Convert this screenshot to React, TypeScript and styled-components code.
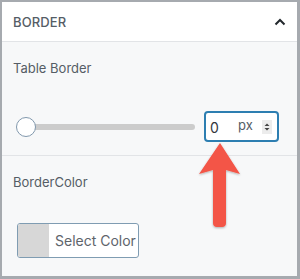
import React from "react";
import styled, { createGlobalStyle } from "styled-components";

const Global = createGlobalStyle`
  html, body { margin: 0; padding: 0; background: #ffffff; }
  * { box-sizing: border-box; }
`;

const Frame = styled.div`
  position: relative;
  width: 300px;
  height: 279px;
  border-style: solid;
  border-color: #a6aaaf;
  border-width: 2px 3px 3px 2px;
  background: #f7f8f9;
  font-family: Inter, "Liberation Sans", sans-serif;
  color: #555d66;
  overflow: hidden;
`;

const Header = styled.div`
  height: 40px;
  background: #ffffff;
  border-bottom: 1px solid #e2e4e7;
  display: flex;
  align-items: center;
  justify-content: space-between;
  padding: 0 10px 0 11px;
`;

const HeaderTitle = styled.span`
  font-size: 13px;
  font-weight: 500;
  letter-spacing: 0.1px;
  color: #555d66;
`;

const Section = styled.div<{ $pt: number; $pb: number; $divider?: boolean }>`
  padding: ${(p) => p.$pt}px 11px ${(p) => p.$pb}px 11px;
  border-bottom: ${(p) => (p.$divider ? "1px solid #e2e4e7" : "none")};
`;

const Label = styled.div`
  font-size: 13px;
  line-height: 18px;
  color: #555d66;
`;

const SliderRow = styled.div`
  display: flex;
  align-items: center;
  margin-top: 34px;
  gap: 9px;
`;

const Track = styled.div`
  position: relative;
  flex: 0 0 178px;
  margin-left: 4px;
  height: 6px;
  border-radius: 3px;
  background: #cccccc;
`;

const Thumb = styled.div`
  position: absolute;
  left: -1px;
  top: 50%;
  width: 20px;
  height: 20px;
  margin-top: -10px;
  border-radius: 50%;
  background: #ffffff;
  border: 1.5px solid #8198ad;
`;

const NumberBox = styled.div`
  width: 75px;
  height: 31px;
  border: 2px solid #2d7eb1;
  border-radius: 4px;
  background: #ffffff;
  display: flex;
  align-items: center;
  padding: 0 0 0 4px;
`;

const NumberValue = styled.span`
  font-size: 14px;
  color: #32373c;
  width: 28px;
  margin-top: 2px;
`;

const Unit = styled.span`
  font-size: 13px;
  color: #555d66;
  margin-top: -4px;
  width: 24px;
`;

const Spinner = styled.div`
  width: 10px;
  height: 14px;
  background: #ececec;
  display: flex;
  align-items: center;
  justify-content: center;
`;

const ColorButton = styled.button`
  margin-top: 32px;
  margin-left: 4px;
  width: 122px;
  height: 35px;
  padding: 0;
  display: flex;
  align-items: stretch;
  background: #ffffff;
  border: 1px solid #7f9cb2;
  border-radius: 3px;
  overflow: hidden;
  font-family: Inter, "Liberation Sans", sans-serif;
  cursor: pointer;
`;

const Swatch = styled.span`
  width: 31px;
  background: #d7d7d7;
`;

const ButtonText = styled.span`
  flex: 1;
  display: flex;
  align-items: center;
  padding-left: 6px;
  font-size: 14px;
  color: #5e646b;
`;

const ArrowLayer = styled.svg`
  position: absolute;
  left: 193px;
  top: 138px;
`;

export default function App() {
  return (
    <>
      <Global />
      <Frame>
        <Header>
          <HeaderTitle>BORDER</HeaderTitle>
          <svg width="14" height="10" viewBox="0 0 14 10">
            <path d="M2.5 7.5 L7 3 L11.5 7.5" fill="none" stroke="#23282d" strokeWidth="2" />
          </svg>
        </Header>
        <Section $pt={17} $pb={13} $divider>
          <Label>Table Border</Label>
          <SliderRow>
            <Track>
              <Thumb />
            </Track>
            <NumberBox>
              <NumberValue>0</NumberValue>
              <Unit>px</Unit>
              <Spinner>
                <svg width="8" height="10" viewBox="0 0 8 10">
                  <path d="M1.5 4 L4 1.5 L6.5 4 Z M1.5 6 L4 8.5 L6.5 6 Z" fill="#444" />
                </svg>
              </Spinner>
            </NumberBox>
          </SliderRow>
        </Section>
        <Section $pt={17} $pb={0}>
          <Label>BorderColor</Label>
          <ColorButton>
            <Swatch />
            <ButtonText>Select Color</ButtonText>
          </ColorButton>
        </Section>
        <ArrowLayer width="50" height="92" viewBox="193 138 50 92">
          <defs>
            <filter id="sh" x="-30%" y="-10%" width="160%" height="130%">
              <feDropShadow dx="0" dy="1" stdDeviation="1" floodColor="#000" floodOpacity="0.3" />
            </filter>
          </defs>
          <path
            d="M218 141 L238 172 L224 168 L224 221 Q224 225 220 225 L215 225 Q211 225 211 221 L211 168 L197 172 Z"
            fill="#f35446"
            filter="url(#sh)"
          />
        </ArrowLayer>
      </Frame>
    </>
  );
}
